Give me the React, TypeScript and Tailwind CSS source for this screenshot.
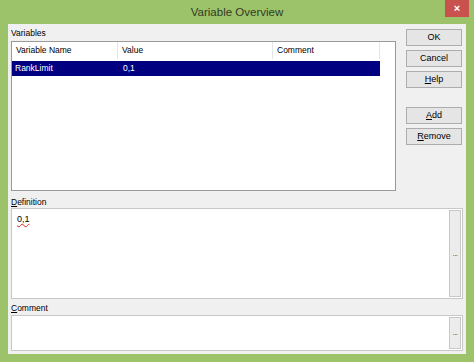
import React from "react";

const font = { fontFamily: '"Liberation Sans", Arial, sans-serif' };

function DlgButton({ label, hot, className = "" }: { label: string; hot?: number; className?: string }) {
  return (
    <button
      className={`block h-[17px] w-[56px] border border-[#adadad] bg-[#e5e5e5] text-[9px] leading-none text-black ${className}`}
    >
      {hot === undefined ? (
        label
      ) : (
        <>
          {label.slice(0, hot)}
          <span className="underline">{label[hot]}</span>
          {label.slice(hot + 1)}
        </>
      )}
    </button>
  );
}

function EditBox({ height, children }: { height: number; children?: React.ReactNode }) {
  return (
    <div
      className="flex border border-[#c8c8c8] bg-white pr-[1px] pt-[1px] pb-[1px]"
      style={{ height }}
    >
      <div className="flex-1 pl-[5px] pt-[3px] text-[9px] text-black">{children}</div>
      <div className="flex w-[12px] items-center justify-center border border-[#c8c8c8] bg-[#ececec] text-[8px] leading-none tracking-[-0.5px] text-[#444]">
        ...
      </div>
    </div>
  );
}

export default function App() {
  return (
    <div className="flex h-[362px] w-[474px] flex-col bg-[#9dc36a]" style={font}>
      {/* title bar */}
      <div className="relative flex h-[24px] items-center justify-center pt-[1px]">
        <span className="text-[11.5px] text-[#2f3a25]">Variable Overview</span>
        <div className="absolute right-[5px] top-0 flex h-[17px] w-[24px] items-center justify-center bg-[#c9524f] text-[11px] font-bold leading-none text-white">
          ×
        </div>
      </div>

      {/* body */}
      <div className="mx-[8px] mb-[8px] flex flex-1 flex-col bg-[#f0f0f0] pl-[3px] pr-[4px]">
        <div className="flex">
          <div className="w-[385px]">
            <div className="h-[17px] pt-[4px] text-[8.5px] leading-[11px] text-black">Variables</div>
            <div className="h-[150px] border border-[#9a9a9a] bg-white">
              <div className="flex h-[17px] text-[8.5px] leading-[16px] text-black">
                <div className="w-[106px] border-r border-[#e5e5e5] pl-[4px]">Variable Name</div>
                <div className="w-[155px] border-r border-[#e5e5e5] pl-[4px]">Value</div>
                <div className="w-[107px] border-r border-[#e5e5e5] pl-[4px]">Comment</div>
              </div>
              <div className="mt-[2px] flex h-[15px] w-[368px] bg-[#000080] text-[8.5px] leading-[15px] text-white">
                <div className="w-[107px] pl-[3px]">RankLimit</div>
                <div className="w-[154px] pl-[4px]">0,1</div>
              </div>
            </div>
          </div>
          <div className="ml-auto flex flex-col gap-[4px] pt-[5px]">
            <DlgButton label="OK" className="border-[#7eb4ea]" />
            <DlgButton label="Cancel" />
            <DlgButton label="Help" hot={0} />
            <DlgButton label="Add" hot={0} className="mt-[15px]" />
            <DlgButton label="Remove" hot={0} />
          </div>
        </div>

        <div className="mt-[5px] h-[12px] text-[8.5px] leading-[12px] text-black">
          <span className="underline">D</span>efinition
        </div>
        <div className="mr-[-1px]">
          <EditBox height={91}>
            <span className="underline decoration-[#e02020] decoration-wavy decoration-1">0,1</span>
          </EditBox>
        </div>

        <div className="mt-[3px] h-[13px] text-[8.5px] leading-[13px] text-black">
          <span className="underline">C</span>omment
        </div>
        <div className="mr-[-1px]">
          <EditBox height={36} />
        </div>
      </div>
    </div>
  );
}
